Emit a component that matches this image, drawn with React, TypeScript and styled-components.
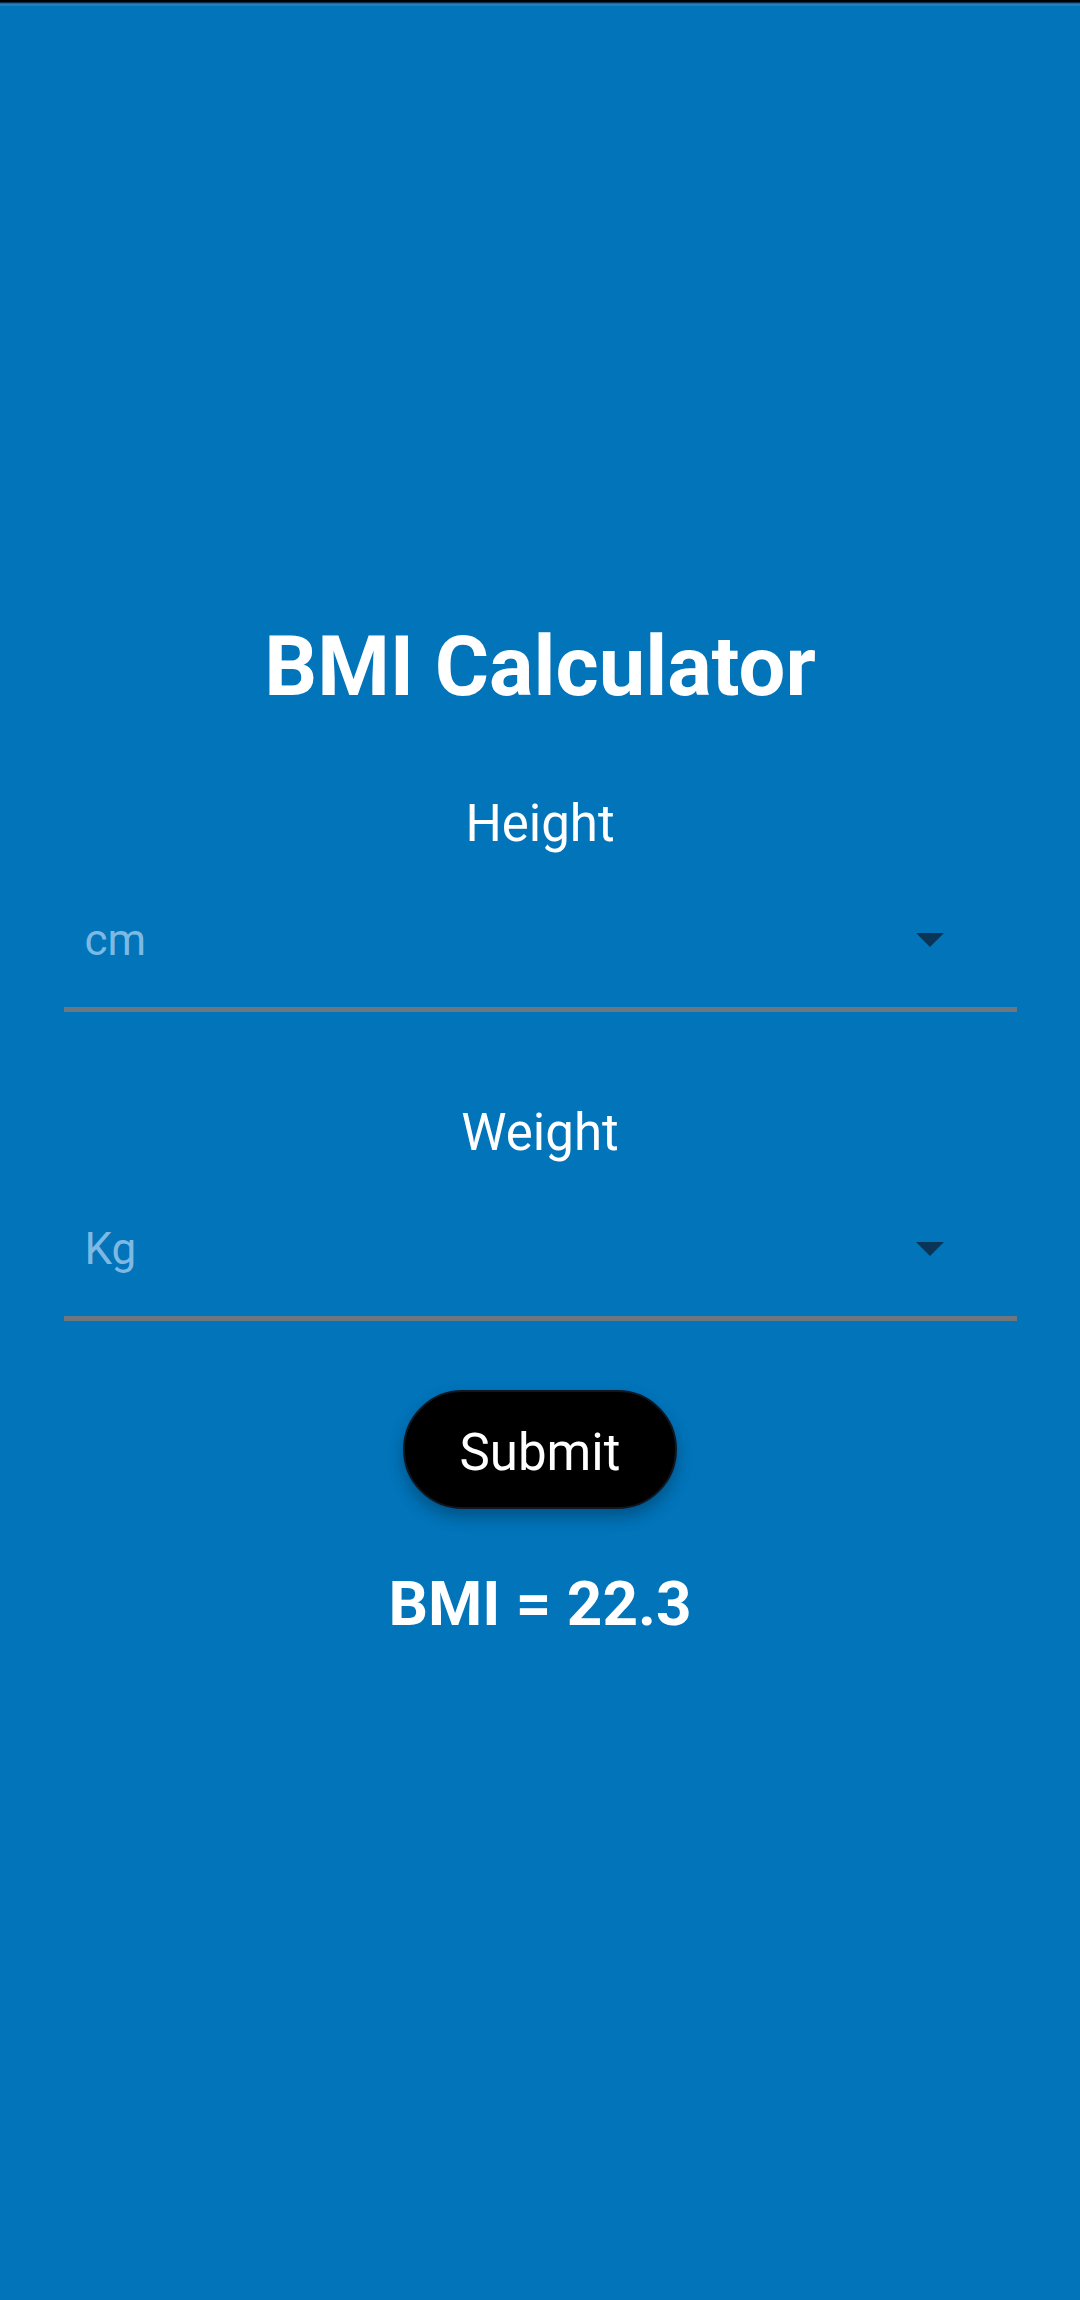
import React from "react";
import styled, { createGlobalStyle } from "styled-components";

const GlobalStyle = createGlobalStyle`
  html, body {
    margin: 0;
    padding: 0;
  }
  body {
    font-family: Roboto, "Noto Sans", "Liberation Sans", sans-serif;
    background: #0174ba;
  }
`;

const Screen = styled.div`
  min-height: 2300px;
  box-sizing: border-box;
  padding-top: 625px;
  display: flex;
  flex-direction: column;
  align-items: center;
  background:
    linear-gradient(
        to bottom,
        #000 0,
        #000 2px,
        #0b5d97 3px,
        #2a8bd0 5px,
        #0174ba 6px
      )
      top / 100% 6px no-repeat,
    #0174ba;
`;

const Title = styled.h1`
  margin: 0;
  font-size: 83px;
  line-height: 1;
  font-weight: 700;
  color: #fff;
`;

const Label = styled.div<{ $gap: number }>`
  margin-top: ${(p) => p.$gap}px;
  font-size: 51px;
  line-height: 1;
  color: #fff;
`;

const Spinner = styled.div`
  margin-top: 69px;
  width: 953px;
  padding-bottom: 45px;
  border-bottom: 5px solid #6e7780;
  display: flex;
  align-items: center;
  justify-content: space-between;
`;

const Hint = styled.span`
  padding-left: 21px;
  font-size: 44px;
  line-height: 1;
  color: #7db9e3;
`;

const Arrow = styled.svg`
  margin-right: 73px;
  display: block;
`;

const SubmitButton = styled.button`
  margin-top: 69px;
  width: 274px;
  height: 119px;
  padding: 6px 0 0;
  border: 2px solid #101722;
  border-radius: 60px;
  background: #000;
  color: #fff;
  font-family: Roboto, "Noto Sans", sans-serif;
  font-size: 51px;
  line-height: 1;
  display: flex;
  align-items: center;
  justify-content: center;
  box-shadow: 0 8px 16px rgba(0, 0, 0, 0.28);
  cursor: pointer;
`;

const Result = styled.div`
  margin-top: 64px;
  font-size: 62px;
  line-height: 1;
  font-weight: 700;
  color: #fff;
`;

const DropArrow = () => (
  <Arrow width="28" height="14" viewBox="0 0 28 14">
    <polygon points="0,0 28,0 14,14" fill="#0b3556" />
  </Arrow>
);

const UnitField = ({ unit }: { unit: string }) => (
  <Spinner>
    <Hint>{unit}</Hint>
    <DropArrow />
  </Spinner>
);

export default function App() {
  return (
    <>
      <GlobalStyle />
      <Screen>
        <Title>BMI Calculator</Title>
        <Label $gap={90}>Height</Label>
        <UnitField unit="cm" />
        <Label $gap={95}>Weight</Label>
        <UnitField unit="Kg" />
        <SubmitButton>Submit</SubmitButton>
        <Result>BMI = 22.3</Result>
      </Screen>
    </>
  );
}
